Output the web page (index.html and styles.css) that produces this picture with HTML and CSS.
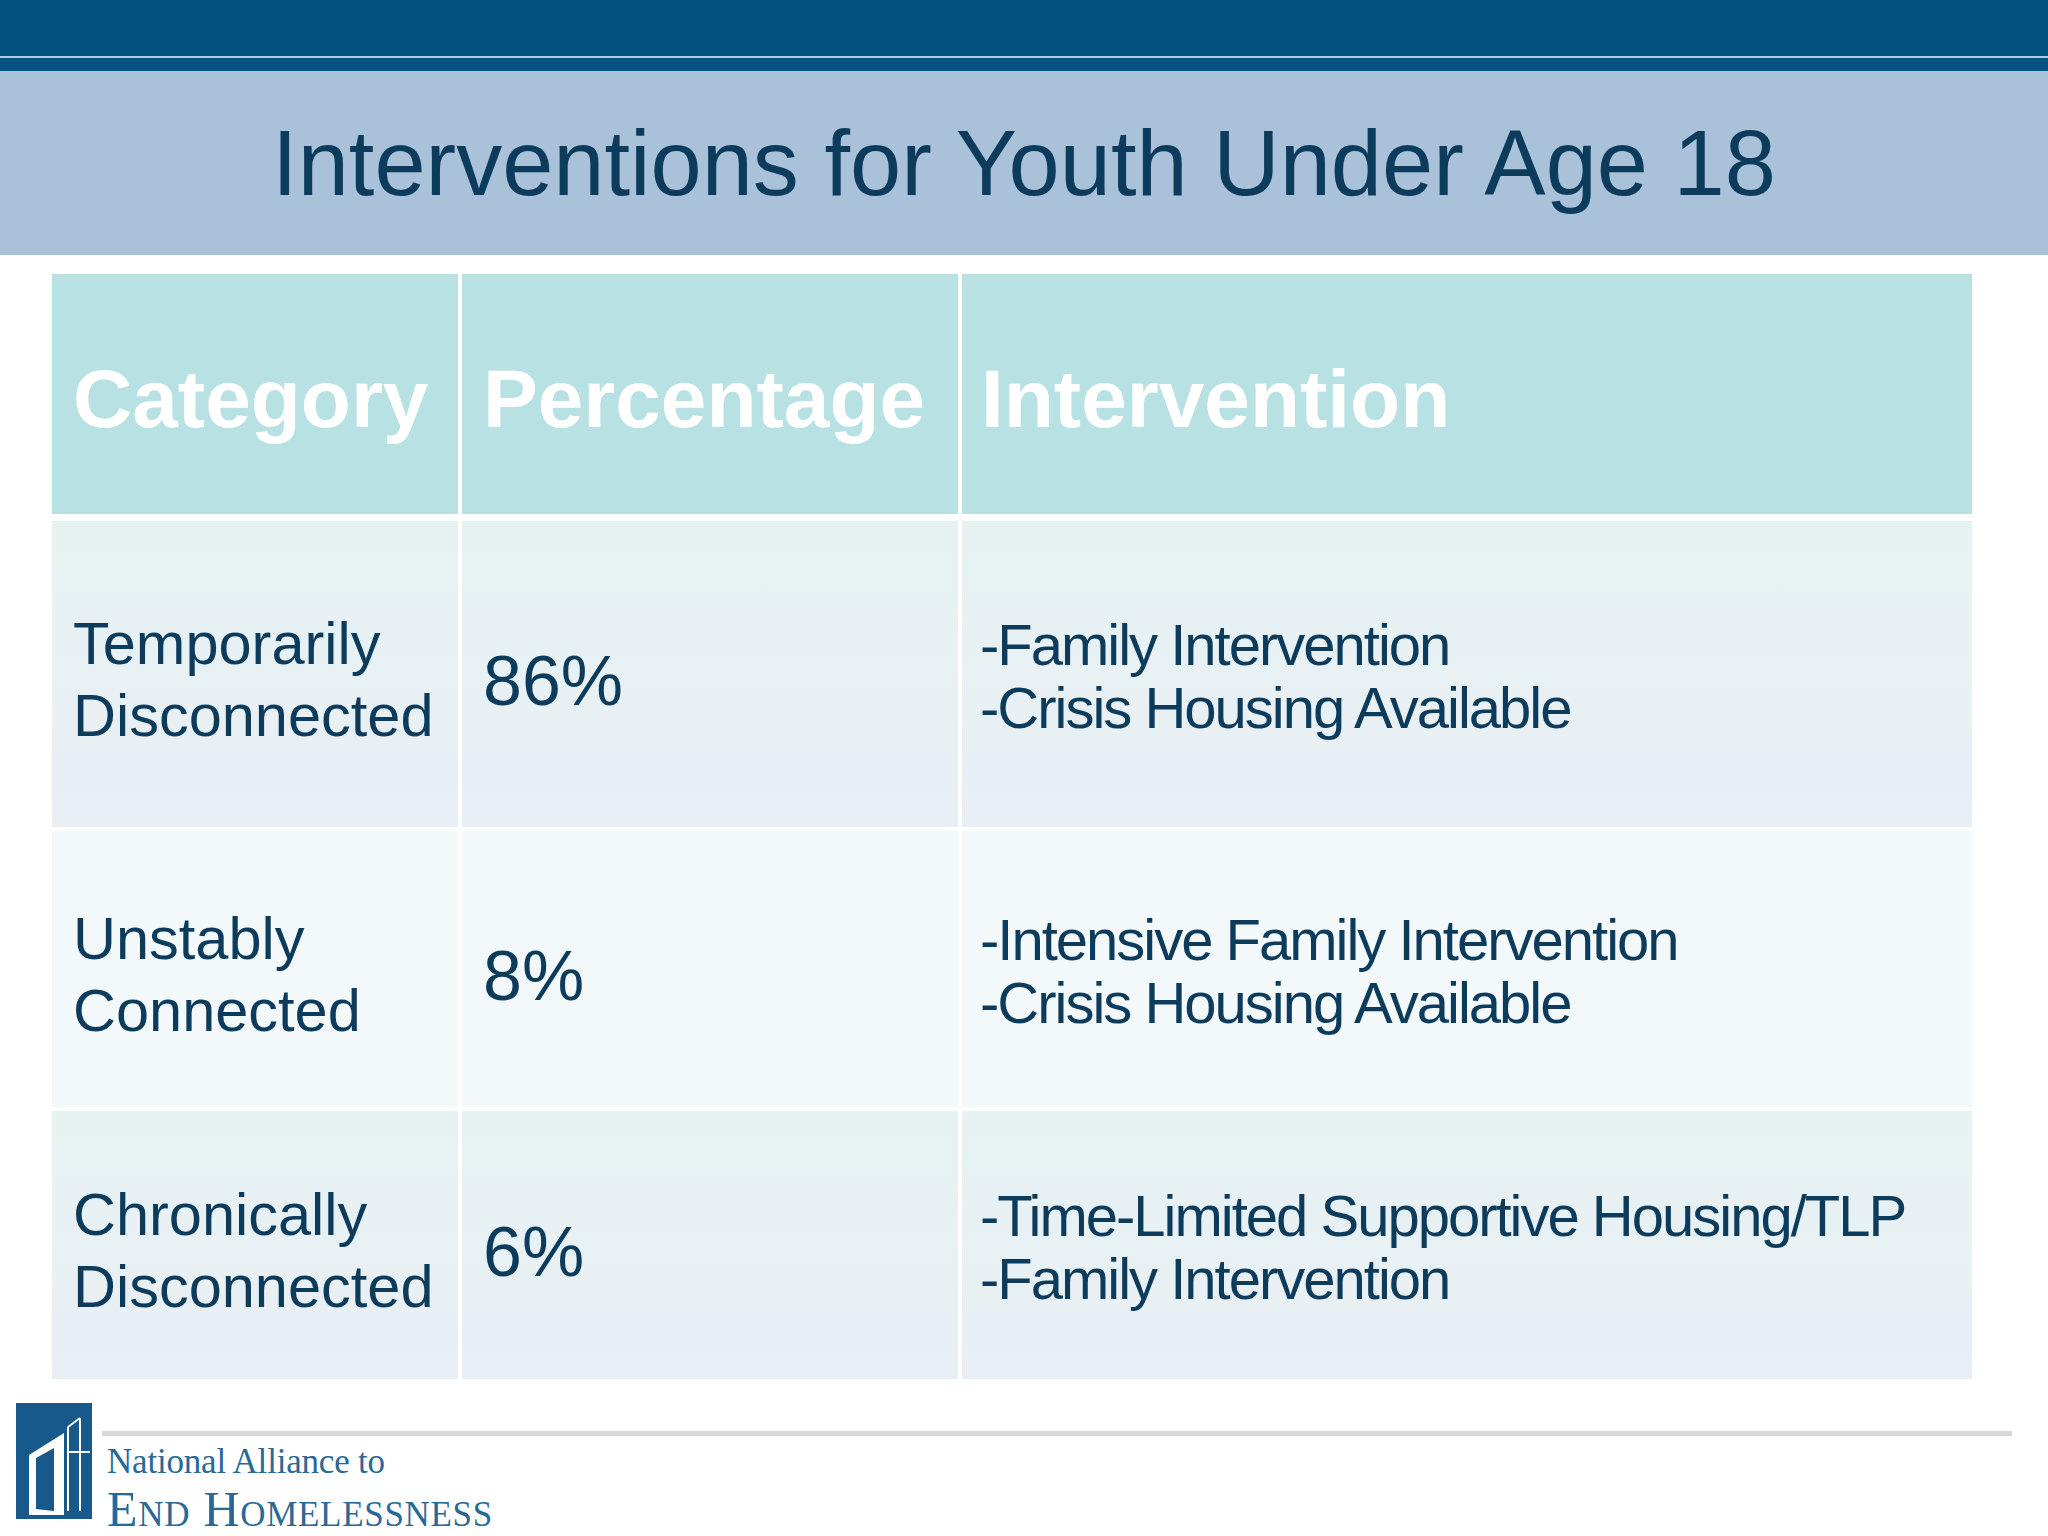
FILE: index.html
```html
<!DOCTYPE html>
<html lang="en">
<head>
<meta charset="utf-8">
<title>Interventions for Youth Under Age 18</title>
<link rel="stylesheet" href="styles.css">
</head>
<body>
<div class="slide">
  <header class="masthead">
    <div class="bar-top"></div>
    <div class="bar-line"></div>
    <div class="bar-bottom"></div>
    <div class="title-band"><h1 class="title">Interventions for Youth Under Age 18</h1></div>
  </header>

  <main class="table">
    <div class="row head">
      <div class="cell">Category</div>
      <div class="cell">Percentage</div>
      <div class="cell">Intervention</div>
    </div>
    <div class="row body r1">
      <div class="cell cat">Temporarily<br>Disconnected</div>
      <div class="cell pct">86%</div>
      <div class="cell int">-Family Intervention<br>-Crisis Housing Available</div>
    </div>
    <div class="row body r2">
      <div class="cell cat">Unstably<br>Connected</div>
      <div class="cell pct">8%</div>
      <div class="cell int">-Intensive Family Intervention<br>-Crisis Housing Available</div>
    </div>
    <div class="row body r3">
      <div class="cell cat">Chronically<br>Disconnected</div>
      <div class="cell pct">6%</div>
      <div class="cell int">-Time-Limited Supportive Housing/TLP<br>-Family Intervention</div>
    </div>
  </main>

  <footer class="footer">
    <svg class="logo" width="76" height="116" viewBox="0 0 76 116" aria-hidden="true">
      <rect width="76" height="116" fill="#16598a"/>
      <polygon points="13,52 48,30 48,112 13,112" fill="#ffffff"/>
      <polygon points="20,55 38,45 38,108 20,106" fill="#16598a"/>
      <path d="M52 24 V108 M64 15 V108 M52 49 H74 M52 24 L64 15" stroke="#ffffff" stroke-width="2" fill="none"/>
    </svg>
    <div class="footer-side">
      <div class="footer-rule"></div>
      <div class="org">
        <div class="org-top">National Alliance to</div>
        <div class="org-bottom">End Homelessness</div>
      </div>
    </div>
  </footer>
</div>
</body>
</html>
```

FILE: styles.css
```css
html, body {
  margin: 0;
  padding: 0;
  background: #ffffff;
}

body {
  font-family: "Liberation Sans", Arial, sans-serif;
  overflow: hidden;
}

.slide {
  width: 2048px;
  height: 1536px;
  display: flex;
  flex-direction: column;
  overflow: hidden;
}

/* ---- masthead ---- */
.bar-top {
  height: 56px;
  background: #03527f;
}

.bar-line {
  height: 2px;
  background: #a9cde6;
}

.bar-bottom {
  height: 13px;
  background: #03527f;
}

.title-band {
  height: 184px;
  background: #a9c2da;
  display: flex;
  align-items: center;
  justify-content: center;
}

.title {
  margin: 0;
  font-size: 92px;
  font-weight: normal;
  line-height: 1;
  color: #0c3b5c;
}

/* ---- table ---- */
.table {
  margin: 19px 0 0 52px;
  width: 1920px;
  display: flex;
  flex-direction: column;
  gap: 4px;
}

.row {
  display: grid;
  grid-template-columns: 406px 496px 1010px;
  column-gap: 4px;
}

.cell {
  display: flex;
  align-items: center;
  padding-left: 21px;
  box-sizing: border-box;
}

.head {
  height: 240px;
  margin-bottom: 3px;
}

.head .cell {
  background: #b8e1e4;
  color: #ffffff;
  font-weight: bold;
  font-size: 82px;
  padding-top: 10px;
}

.head .cell:last-child {
  padding-left: 19px;
}

.body .cell {
  color: #0c3b5c;
}

.r1 { height: 306px; }
.r2 { height: 276px; }
.r3 { height: 268px; }

.r1 .cell, .r3 .cell {
  background: linear-gradient(#e6f2f2, #e9eff5);
}

.r2 .cell {
  background: #f3f8fa;
}

.cat {
  font-size: 59.5px;
  line-height: 72px;
  padding-top: 12px;
}

.pct {
  font-size: 70px;
  padding-top: 14px;
}

.body .int {
  font-size: 58px;
  line-height: 63px;
  letter-spacing: -2px;
  padding-top: 4px;
  padding-left: 18px;
}

/* ---- footer ---- */
.footer {
  margin-top: 24px;
  padding-left: 16px;
  display: flex;
  align-items: flex-start;
}

.logo {
  display: block;
  flex: none;
}

.footer-side {
  margin-left: 10px;
  display: flex;
  flex-direction: column;
}

.footer-rule {
  width: 1910px;
  height: 5px;
  margin-top: 28px;
  background: #d8d8d8;
}

.org {
  margin-top: 8px;
  margin-left: 5px;
  font-family: "Liberation Serif", "Times New Roman", serif;
  color: #2a6896;
}

.org-top {
  font-size: 35px;
  line-height: 35px;
  letter-spacing: -0.2px;
}

.org-bottom {
  font-size: 50px;
  line-height: 60px;
  font-variant: small-caps;
  letter-spacing: 0.7px;
}
```
